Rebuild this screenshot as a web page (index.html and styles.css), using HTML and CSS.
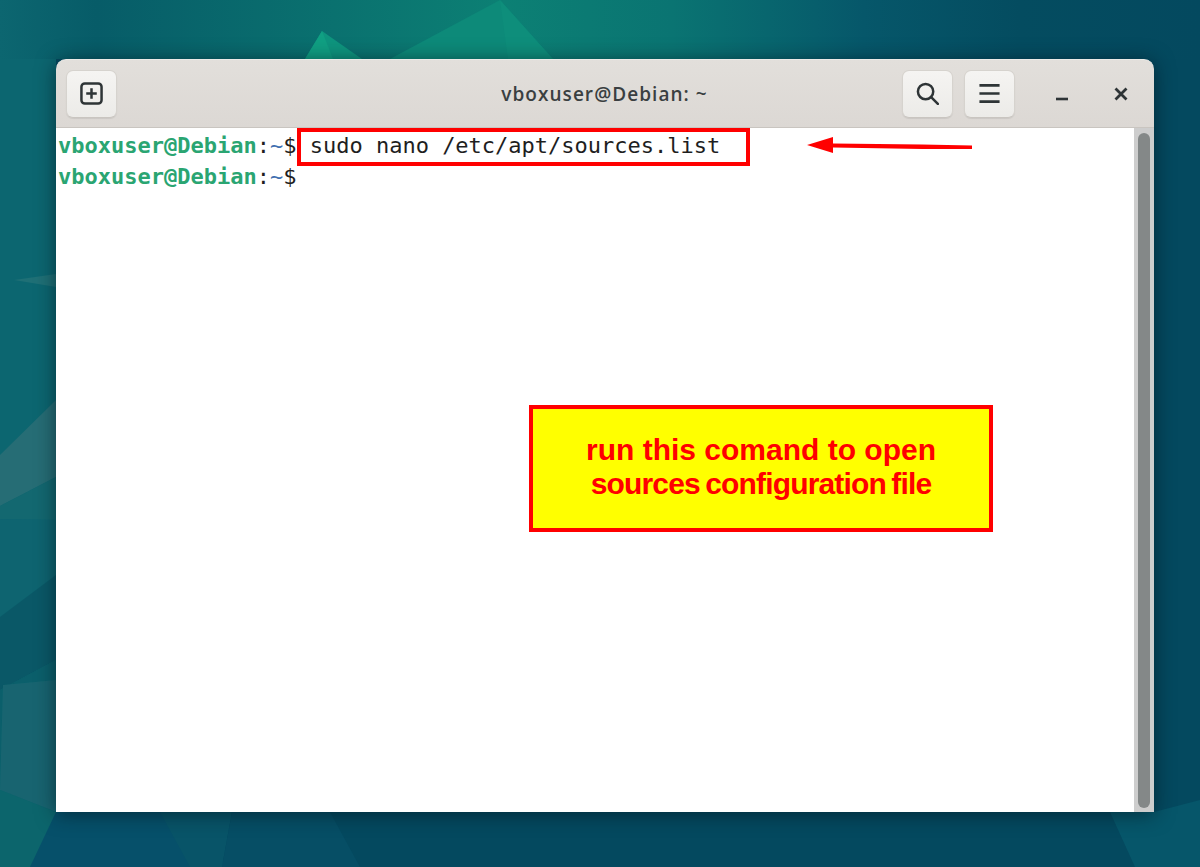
FILE: index.html
```html
<!DOCTYPE html>
<html lang="en">
<head>
<meta charset="utf-8">
<title>vboxuser@Debian: ~</title>
<link rel="stylesheet" href="styles.css">
</head>
<body>
<div class="desktop">
  <svg class="wallpaper" viewBox="0 0 1200 867" preserveAspectRatio="none" aria-hidden="true">
    <defs>
      <linearGradient id="wall" x1="0" y1="0" x2="1" y2="0">
        <stop offset="0" stop-color="#0c6670"/>
        <stop offset="0.08" stop-color="#075c68"/>
        <stop offset="0.42" stop-color="#0c8074"/>
        <stop offset="0.56" stop-color="#0a7472"/>
        <stop offset="0.72" stop-color="#06576a"/>
        <stop offset="0.85" stop-color="#044c60"/>
        <stop offset="1" stop-color="#04495f"/>
      </linearGradient>
    </defs>
    <rect width="1200" height="867" fill="url(#wall)"/>
    <polygon points="500,0 553,59 390,59" fill="#0d8a79"/>
    <polygon points="500,0 508,59 553,59" fill="#0e8e7b"/>
    <polygon points="322,31 362,59 305,59" fill="#0e957e"/>
    <polygon points="322,31 333,59 305,59" fill="#10a083"/>
    <rect x="56" y="59" width="1144" height="808" fill="#04495f"/>
    <rect width="56" height="640" y="59" fill="#0c6670"/>
    <polygon points="0,455 56,400 56,477 0,506" fill="#266d75"/>
    <polygon points="0,506 56,477 56,520 0,519" fill="#136870"/>
    <polygon points="14,280 56,274 56,287" fill="#1f7076"/>
    <polygon points="0,519 56,520 56,575 0,617" fill="#0e6470"/>
    <polygon points="0,617 56,575 56,660 0,690" fill="#0a5867"/>
    <polygon points="0,690 56,660 56,680 3,685 0,790" fill="#0b5f6b"/>
    <polygon points="3,685 56,680 56,812 0,790" fill="#186470"/>
    <polygon points="0,790 56,812 56,820 30,867 0,867" fill="#0c656c"/>
    <polygon points="56,812 30,867 230,867 160,812" fill="#06506a"/>
    <polygon points="160,812 232,812 222,867 190,867" fill="#085468"/>
    <polygon points="232,812 330,812 360,867 222,867" fill="#064e65"/>
    <polygon points="1110,812 1154,812 1200,800 1200,867 1135,867" fill="#06566a"/>
  </svg>

  <main class="window">
    <header class="headerbar">
      <button class="hbtn" type="button" aria-label="New tab">
        <svg class="icon" viewBox="0 0 24 24"><rect x="1.500" y="1.500" width="21" height="21" rx="3.500" fill="none" stroke="#2e3436" stroke-width="2.600"/><path d="M12 6.500v11M6.500 12h11" fill="none" stroke="#2e3436" stroke-width="2.600"/></svg>
      </button>
      <h1 class="title">vboxuser@Debian: ~</h1>
      <div class="hactions">
        <button class="hbtn" type="button" aria-label="Search">
          <svg class="icon" viewBox="0 0 24 24"><circle cx="10" cy="10" r="8" fill="none" stroke="#2e3436" stroke-width="2.600"/><path d="M15.800 15.800l7 7" fill="none" stroke="#2e3436" stroke-width="2.600" stroke-linecap="round"/></svg>
        </button>
        <button class="hbtn" type="button" aria-label="Menu">
          <svg class="icon" viewBox="0 0 24 24"><path d="M1.500 3.500h21M1.500 12h21M1.500 20.500h21" fill="none" stroke="#2e3436" stroke-width="2.800"/></svg>
        </button>
      </div>
      <div class="wctrls">
        <button class="wbtn" type="button" aria-label="Minimize">
          <svg class="wicon" viewBox="0 0 14 14"><path d="M1 12h12" fill="none" stroke="#2e3436" stroke-width="2.600"/></svg>
        </button>
        <button class="wbtn" type="button" aria-label="Close">
          <svg class="wicon" viewBox="0 0 14 14"><path d="M1.500 1.500l11 11M12.500 1.500l-11 11" fill="none" stroke="#2e3436" stroke-width="2.800"/></svg>
        </button>
      </div>
    </header>
    <div class="content">
      <div class="terminal">
        <div class="line"><span class="user">vboxuser@Debian</span>:<span class="path">~</span>$ sudo nano /etc/apt/sources.list</div>
        <div class="line"><span class="user">vboxuser@Debian</span>:<span class="path">~</span>$</div>
        <div class="cmd-box"></div>
        <svg class="arrow" viewBox="0 0 170 24" aria-hidden="true"><polygon points="0,9 26,1 26,7.500 115,8.500 165,9.500 165,13 115,13 26,11.500 26,17" fill="#f00"/></svg>
        <div class="callout">
          <p>run this comand to open</p>
          <p class="tight">sources configuration file</p>
        </div>
      </div>
      <div class="scrollbar"><div class="thumb"></div></div>
    </div>
  </main>
</div>
</body>
</html>
```
FILE: styles.css
```css
* { box-sizing: border-box; }
html, body { margin: 0; height: 100%; }
body { overflow: hidden; background: #04495f; }

.desktop {
  position: relative;
  width: 1200px;
  height: 867px;
  padding: 59px 46px 55px 56px;
  display: flex;
  overflow: hidden;
}
.wallpaper { position: absolute; inset: 0; width: 100%; height: 100%; }
.window {
  position: relative;
  flex: 1;
  display: flex;
  flex-direction: column;
  border-radius: 10px 10px 0 0;
  box-shadow: 0 2px 20px rgba(0, 20, 30, .6);
}
.headerbar {
  height: 69px;
  flex: none;
  display: flex;
  align-items: center;
  padding: 0 0 0 10px;
  background: linear-gradient(#e2dfdb, #dcd8d4);
  border-top: 1px solid #eceae7;
  border-bottom: 1px solid #c9c5c0;
  border-radius: 10px 10px 0 0;
}
.hbtn {
  width: 51px;
  height: 48px;
  padding: 0;
  display: flex;
  align-items: center;
  justify-content: center;
  background: linear-gradient(#f5f4f2, #ecebe8);
  border: 1px solid #d6d3ce;
  border-bottom-color: #c9c5c0;
  border-radius: 7px;
  box-shadow: 0 1px 1px rgba(0, 0, 0, .08);
}
.icon { width: 23px; height: 23px; display: block; }
.title {
  flex: 1;
  margin: 0;
  text-align: center;
  font: 600 19px "Open Sans", sans-serif;
  letter-spacing: 1.05px;
  color: #3a3f41;
  padding: 0 0 0 190px;
  white-space: nowrap;
}
.hactions { display: flex; gap: 11px; }
.wctrls { display: flex; gap: 45px; padding: 0 26px 0 40px; }
.wbtn { width: 14px; height: 14px; padding: 0; border: 0; background: none; display: block; }
.wicon { width: 14px; height: 14px; display: block; }

.content { flex: 1; display: flex; min-height: 0; }
.terminal {
  position: relative;
  flex: 1;
  background: #fff;
  padding: 2px 0 0 2px;
  font: 22px/31px "DejaVu Sans Mono", monospace;
  color: #1e1e1e;
}
.line { white-space: pre; }
.user { color: #2aa572; font-weight: 700; }
.path { color: #3f6fb0; }
.cmd-box {
  position: absolute;
  left: 241px; top: 0;
  width: 453px; height: 38px;
  border: 4px solid #f00;
}
.arrow {
  position: absolute;
  left: 751px; top: 8px;
  width: 170px; height: 24px;
}
.callout {
  position: absolute;
  left: 473px; top: 277px;
  width: 464px; height: 127px;
  background: #ff0;
  border: 4px solid #f00;
  color: #f00;
  font: 700 30px/34px "Liberation Sans", Arial, sans-serif;
  text-align: center;
  display: flex;
  flex-direction: column;
  justify-content: center;
  padding-bottom: 3px;
  white-space: nowrap;
}
.callout p { margin: 0; }
.callout .tight { letter-spacing: -.85px; word-spacing: -2px; }
.scrollbar {
  flex: none;
  width: 20px;
  padding: 5px 4px 4px;
  background: #cdcdcd;
  display: flex;
}
.thumb { flex: 1; background: #848888; border-radius: 6px; }
```
